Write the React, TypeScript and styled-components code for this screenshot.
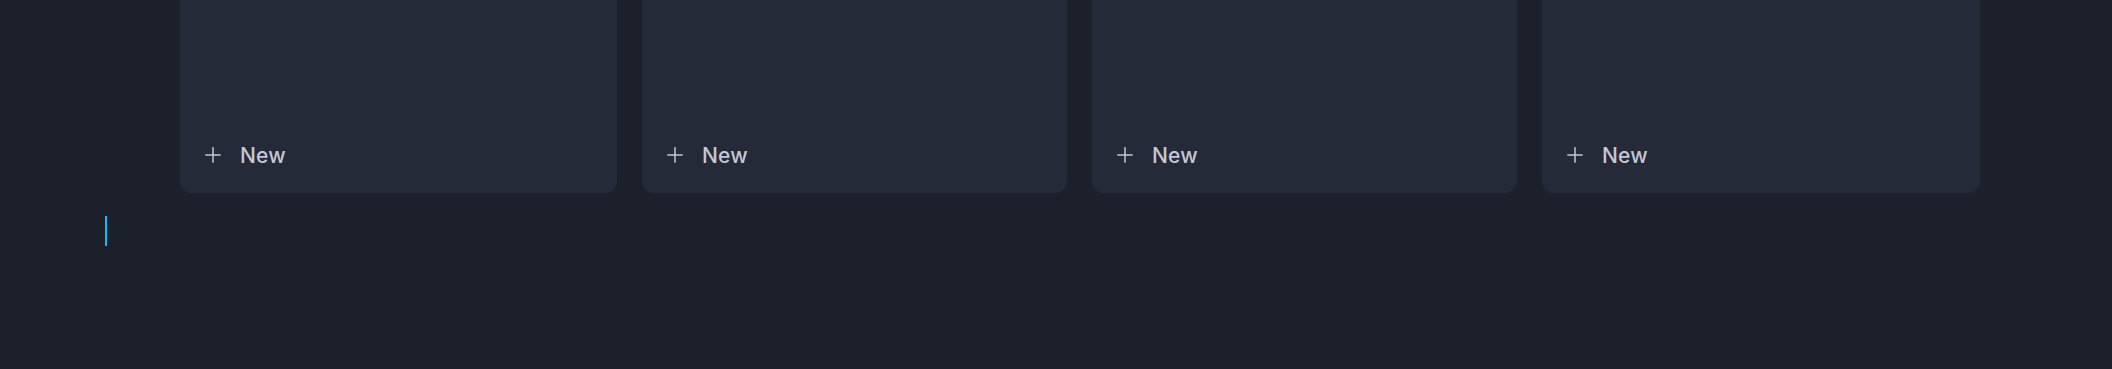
import React from "react";
import styled, { createGlobalStyle } from "styled-components";

const GlobalStyle = createGlobalStyle`
  html, body {
    margin: 0;
    padding: 0;
    background: #1b202b;
    overflow: hidden;
  }
  body {
    font-family: Inter, "Open Sans", "Liberation Sans", sans-serif;
    -webkit-font-smoothing: antialiased;
  }
`;

const Page = styled.div`
  width: 2112px;
  height: 369px;
  background: #1b202b;
  padding-left: 105px;
  box-sizing: border-box;
  display: flex;
  flex-direction: column;
  overflow: hidden;
`;

const Board = styled.div`
  display: flex;
  gap: 25px;
  margin-left: 75px;
  margin-top: -40px;
`;

const Column = styled.div<{ $w: number }>`
  width: ${(p) => p.$w}px;
  height: 233px;
  background: #242a38;
  border-radius: 12px;
  display: flex;
  flex-direction: column;
  justify-content: flex-end;
  padding: 0 0 18px 25px;
  box-sizing: border-box;
`;

const NewButton = styled.button`
  display: flex;
  align-items: center;
  gap: 19px;
  height: 40px;
  padding: 0;
  border: none;
  background: transparent;
  color: #c3c8d4;
  font-family: Inter, "Open Sans", "Liberation Sans", sans-serif;
  font-size: 21px;
  font-weight: 500;
  letter-spacing: 0.2px;
  cursor: pointer;
`;

const Caret = styled.div`
  width: 2px;
  height: 30px;
  margin-top: 23px;
  background: #19b8f0;
`;

const PlusIcon = () => (
  <svg width="16" height="16" viewBox="0 0 16 16" fill="none">
    <path d="M8 0.8v14.4M0.8 8h14.4" stroke="#c3c8d4" strokeWidth="1.5" strokeLinecap="round" />
  </svg>
);

const widths = [437, 425, 425, 438];

export default function App() {
  return (
    <>
      <GlobalStyle />
      <Page>
        <Board>
          {widths.map((w, i) => (
            <Column key={i} $w={w}>
              <NewButton>
                <PlusIcon />
                New
              </NewButton>
            </Column>
          ))}
        </Board>
        <Caret />
      </Page>
    </>
  );
}
